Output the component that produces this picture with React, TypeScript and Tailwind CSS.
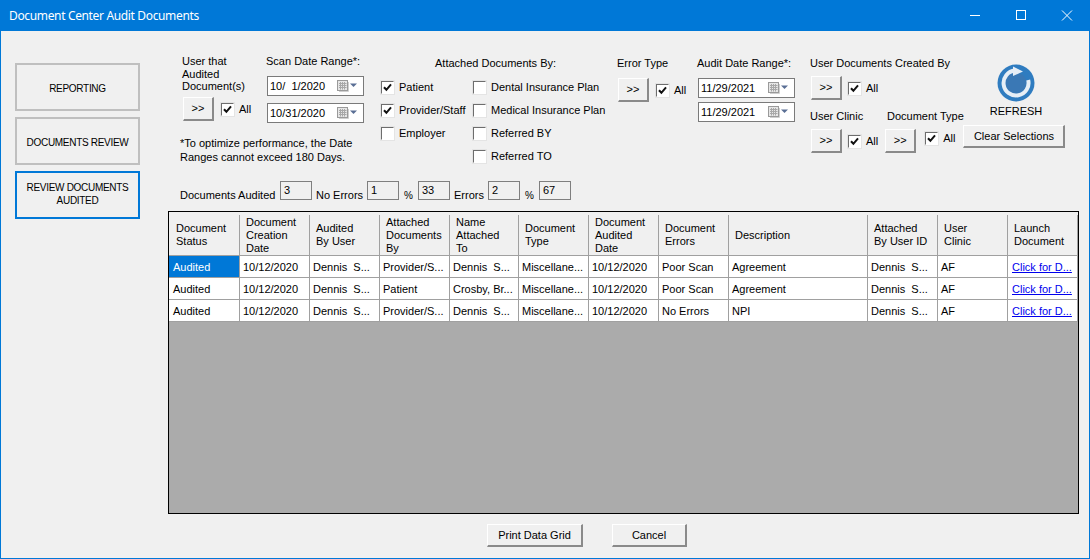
const headers = [
  ["Document", "Status"],
  ["Document", "Creation", "Date"],
  ["Audited", "By User"],
  ["Attached", "Documents", "By"],
  ["Name", "Attached", "To"],
  ["Document", "Type"],
  ["Document", "Audited", "Date"],
  ["Document", "Errors"],
  ["Description"],
  ["Attached", "By User ID"],
  ["User", "Clinic"],
  ["Launch", "Document"],
];

const rows = [
  ["Audited", "10/12/2020", "Dennis  S...", "Provider/S...", "Dennis  S...", "Miscellane...", "10/12/2020", "Poor Scan", "Agreement", "Dennis  S...", "AF", "Click for D..."],
  ["Audited", "10/12/2020", "Dennis  S...", "Patient", "Crosby, Br...", "Miscellane...", "10/12/2020", "Poor Scan", "Agreement", "Dennis  S...", "AF", "Click for D..."],
  ["Audited", "10/12/2020", "Dennis  S...", "Provider/S...", "Dennis  S...", "Miscellane...", "10/12/2020", "No Errors", "NPI", "Dennis  S...", "AF", "Click for D..."],
];

function Check({ checked, className = "" }: { checked?: boolean; className?: string }) {
  return (
    <span className={"flex h-[13px] w-[13px] shrink-0 items-center justify-center border border-t-[#6d6d6d] border-l-[#6d6d6d] border-r-white border-b-white bg-white outline outline-1 outline-[#e4e4e4] " + className}>
      {checked && (
        <svg width="9" height="9" viewBox="0 0 9 9">
          <path d="M1 4.2 L3.4 6.8 L8 1.4" fill="none" stroke="#111" strokeWidth="2" />
        </svg>
      )}
    </span>
  );
}

function ArrowButton({ className = "" }: { className?: string }) {
  return <Btn className={"h-[24px] w-[31px] " + className}>&gt;&gt;</Btn>;
}

function Btn({ children, className = "" }: { children: React.ReactNode; className?: string }) {
  return (
    <button className={"flex shrink-0 items-center justify-center border border-t-white border-l-white border-b-2 border-r-2 border-b-[#8a8a8a] border-r-[#8a8a8a] bg-[#f0f0f0] " + className}>
      {children}
    </button>
  );
}

function AllCheck({ className = "" }: { className?: string }) {
  return (
    <div className={"flex items-center " + className}>
      <Check checked />
      <span className="ml-[5px]">All</span>
    </div>
  );
}

function DateBox({ value, className = "" }: { value: string; className?: string }) {
  return (
    <div className={"flex h-[20px] w-[97px] items-center border border-[#7a7a7a] bg-white pl-[2px] " + className}>
      <span className="w-[67px] whitespace-pre">{value}</span>
      <svg width="22" height="12" viewBox="0 0 22 12">
        <rect x="0.5" y="0.5" width="10" height="10" fill="#e6e6e6" stroke="#9a9a9a" />
        <path d="M2 3.5H9.5M2 5.5H9.5M2 7.5H9.5M3.5 2V9.5M5.5 2V9.5M7.5 2V9.5" stroke="#a8a8a8" strokeWidth="1" />
        <path d="M11.5 2V11.5H2" fill="none" stroke="#cfcfcf" />
        <path d="M13 3.5H20L16.5 7Z" fill="#5a6f95" />
      </svg>
    </div>
  );
}

function Option({ label, checked, className = "" }: { label: string; checked?: boolean; className?: string }) {
  return (
    <div className={"flex h-[23px] items-center whitespace-nowrap " + className}>
      <Check checked={checked} />
      <span className="ml-[5px]">{label}</span>
    </div>
  );
}

function Stat({ value, className = "" }: { value: string; className?: string }) {
  return (
    <div className={"h-[19px] w-[32px] border border-[#7f7f7f] pl-[3px] pt-[1px] leading-[14px] " + className}>{value}</div>
  );
}

function NavButton({ lines, active }: { lines: string[]; active?: boolean }) {
  return (
    <div className={"flex h-[48px] w-[125px] flex-col items-center justify-center border-2 text-[10px] leading-[13px] tracking-[-0.3px] " + (active ? "border-[#0078d7] pb-[2px]" : "border-[#bfbfbf] pt-[2px]")}>
      {lines.map((l) => (
        <span key={l}>{l}</span>
      ))}
    </div>
  );
}

export default function App() {
  return (
    <div className="flex h-[559px] w-[1090px] flex-col overflow-hidden border border-t-0 border-[#0078d7] bg-[#f0f0f0] text-[11px] leading-[13px] text-black [font-family:'Liberation_Sans',Arial,sans-serif]">
      <div className="flex h-[31px] shrink-0 items-center justify-between bg-[#0078d7] pl-[8px] text-white">
        <span className="text-[12px] tracking-[-0.35px] [font-family:'Noto_Sans',sans-serif]">Document Center Audit Documents</span>
        <div className="flex items-center">
          <svg width="46" height="31" viewBox="0 0 46 31"><path d="M18 15.5H28" stroke="#fff" /></svg>
          <svg width="46" height="31" viewBox="0 0 46 31"><rect x="18.5" y="10.5" width="9" height="9" fill="none" stroke="#fff" /></svg>
          <svg width="45" height="31" viewBox="0 0 45 31"><path d="M18 10.5L28 20.5M28 10.5L18 20.5" stroke="#fff" /></svg>
        </div>
      </div>

      <div className="flex flex-1">
        <div className="ml-[14px] flex w-[153px] flex-col gap-[6px] pt-[32px]">
          <NavButton lines={["REPORTING"]} />
          <NavButton lines={["DOCUMENTS REVIEW"]} />
          <NavButton lines={["REVIEW DOCUMENTS", "AUDITED"]} active />
        </div>

        <div className="flex w-[911px] flex-col pt-[1px]">
          <div className="flex h-[150px]">
            {/* user + scan date */}
            <div className="ml-[12px] w-[199px]">
              <div className="flex">
                <div className="w-[85px] pl-[2px]">
                  <div className="h-[61px] pt-[23px] leading-[12.5px]">
                    User that<br />Audited<br />Document(s)
                  </div>
                  <div className="mt-[4px] flex items-center">
                    <ArrowButton className="ml-[1px]" />
                    <AllCheck className="ml-[7px]" />
                  </div>
                </div>
                <div className="ml-[1px] pt-[23px]">
                  <div className="whitespace-nowrap">Scan Date Range*:</div>
                  <DateBox value="10/  1/2020" className="ml-[1px] mt-[8px]" />
                  <DateBox value="10/31/2020" className="ml-[1px] mt-[7px]" />
                </div>
              </div>
              <div className="mt-[14px] whitespace-nowrap">
                *To optimize performance, the Date<br />
                <span className="mt-[1px] block">Ranges cannot exceed 180 Days.</span>
              </div>
            </div>

            {/* attached documents */}
            <div className="ml-[2px] w-[236px] pt-[25px]">
              <div className="ml-[54px]">Attached Documents By:</div>
              <div className="mt-[6px] flex">
                <div className="w-[92px]">
                  <Option label="Patient" checked />
                  <Option label="Provider/Staff" checked />
                  <Option label="Employer" />
                </div>
                <div>
                  <Option label="Dental Insurance Plan" />
                  <Option label="Medical Insurance Plan" />
                  <Option label="Referred BY" />
                  <Option label="Referred TO" />
                </div>
              </div>
            </div>

            {/* error type */}
            <div className="w-[80px] pt-[25px]">
              <div>Error Type</div>
              <div className="mt-[8px] flex items-center pl-[1px]">
                <ArrowButton />
                <AllCheck className="ml-[7px]" />
              </div>
            </div>

            {/* audit date */}
            <div className="w-[113px] pt-[25px]">
              <div className="whitespace-nowrap">Audit Date Range*:</div>
              <DateBox value="11/29/2021" className="ml-[1px] mt-[8px]" />
              <DateBox value="11/29/2021" className="ml-[1px] mt-[4px]" />
            </div>

            {/* user docs, clinic, type, refresh */}
            <div className="w-[260px] pt-[25px]">
              <div className="whitespace-nowrap">User Documents Created By</div>
              <div className="flex">
                <div className="mt-[6px] flex h-[24px] w-[70px] items-center pl-[1px]">
                  <ArrowButton />
                  <AllCheck className="ml-[6px] mt-[1px]" />
                </div>
                <div className="ml-[96px] flex w-[80px] flex-col items-center">
                  <svg width="38" height="38" viewBox="0 0 38 38" className="mt-[-6px]">
                    <circle cx="19" cy="19" r="18.5" fill="#2f7cc0" />
                    <circle cx="19" cy="19" r="10.5" fill="#3a78b5" />
                    <path d="M18 6.5A12.5 12.5 0 1 0 31.2 16" fill="none" stroke="#e6eef6" strokeWidth="4" />
                    <path d="M16 2.5L26 7.5L16 12Z" fill="#e6eef6" />
                  </svg>
                  <div className="mt-[3px]">REFRESH</div>
                </div>
              </div>
              <div className="mt-[-8px] flex">
                <div className="w-[75px]">User Clinic</div>
                <div className="ml-[2px]">Document Type</div>
              </div>
              <div className="mt-[6px] flex items-start pl-[1px]">
                <ArrowButton />
                <AllCheck className="ml-[6px] mt-[6px]" />
                <ArrowButton className="ml-[7px]" />
                <AllCheck className="ml-[9px] mt-[3px]" />
                <Btn className="ml-[8px] mt-[-4px] h-[23px] w-[102px]">Clear Selections</Btn>
              </div>
            </div>
          </div>

          <div className="ml-[12px] mt-[-1px] flex h-[19px] items-center">
            <span className="mt-[9px] w-[100px] whitespace-nowrap">Documents Audited</span>
            <Stat value="3" />
            <span className="ml-[4px] mt-[9px] w-[51px] whitespace-nowrap">No Errors</span>
            <Stat value="1" />
            <span className="ml-[5px] mt-[9px] w-[14px] text-[10px]">%</span>
            <Stat value="33" />
            <span className="ml-[4px] mt-[9px] w-[34px]">Errors</span>
            <Stat value="2" />
            <span className="ml-[5px] mt-[9px] w-[14px] text-[10px]">%</span>
            <Stat value="67" />
          </div>

          <div className="mt-[11px] h-[303px] w-[911px] border border-black bg-[#ababab]">
            <div className="grid grid-cols-[71px_70px_70px_70px_69px_70px_70px_70px_139px_70px_70px_70px]">
              {headers.map((h, j) => (
                <div key={h.join()} className="h-[44px] border-b border-b-[#a0a0a0] bg-[#f0f0f0] pt-[3px]">
                  <div className={"flex h-full flex-col justify-center border-r border-r-[#a0a0a0] leading-[13px] " + (j === 0 ? "pl-[7px]" : "pl-[6px]")}>
                    {h.map((l) => (
                      <span key={l} className="whitespace-nowrap">{l}</span>
                    ))}
                  </div>
                </div>
              ))}
              {rows.map((r, i) =>
                r.map((c, j) => (
                  <div
                    key={i + "-" + j}
                    className={
                      "flex h-[22px] items-center whitespace-pre border-r border-b border-r-[#a0a0a0] border-b-[#a0a0a0] pt-[1px] " +
                      (j === 0 || j === 11 ? "pl-[4px] " : "pl-[3px] ") +
                      (i === 0 && j === 0 ? "bg-[#0078d7] text-white " : "bg-white ") +
                      (j === 11 ? "text-[#0000ee] underline" : "")
                    }
                  >
                    {c}
                  </div>
                ))
              )}
            </div>
          </div>
        </div>
      </div>

      <div className="flex h-[44px] shrink-0 items-start pl-[486px] pt-[10px]">
        <Btn className="h-[23px] w-[96px]">Print Data Grid</Btn>
        <Btn className="ml-[29px] h-[23px] w-[75px]">Cancel</Btn>
      </div>
    </div>
  );
}
